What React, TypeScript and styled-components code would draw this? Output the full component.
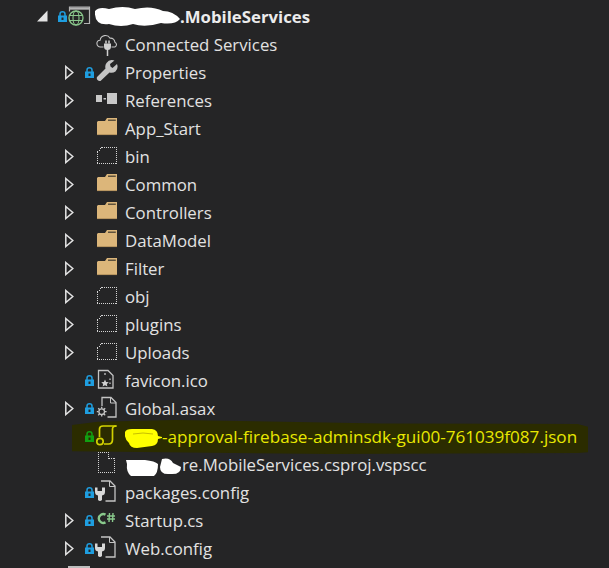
import React from "react";
import styled, { createGlobalStyle } from "styled-components";

type IconKind =
  | "cloud"
  | "wrench"
  | "refs"
  | "folder"
  | "ghost"
  | "ghostFile"
  | "ico"
  | "asax"
  | "json"
  | "config"
  | "csharp";

type Node = {
  label: string;
  icon: IconKind;
  arrow?: boolean;
  lock?: boolean;
  prefix?: "json" | "vspscc";
};

const nodes: Node[] = [
  { label: "Connected Services", icon: "cloud" },
  { label: "Properties", icon: "wrench", arrow: true, lock: true },
  { label: "References", icon: "refs", arrow: true },
  { label: "App_Start", icon: "folder", arrow: true },
  { label: "bin", icon: "ghost", arrow: true },
  { label: "Common", icon: "folder", arrow: true },
  { label: "Controllers", icon: "folder", arrow: true },
  { label: "DataModel", icon: "folder", arrow: true },
  { label: "Filter", icon: "folder", arrow: true },
  { label: "obj", icon: "ghost", arrow: true },
  { label: "plugins", icon: "ghost", arrow: true },
  { label: "Uploads", icon: "ghost", arrow: true },
  { label: "favicon.ico", icon: "ico", lock: true },
  { label: "Global.asax", icon: "asax", arrow: true, lock: true },
  {
    label: "-approval-firebase-adminsdk-gui00-761039f087.json",
    icon: "json",
    lock: true,
    prefix: "json",
  },
  { label: "re.MobileServices.csproj.vspscc", icon: "ghostFile", prefix: "vspscc" },
  { label: "packages.config", icon: "config", lock: true },
  { label: "Startup.cs", icon: "csharp", arrow: true, lock: true },
  { label: "Web.config", icon: "config", arrow: true, lock: true },
];

function Arrow() {
  return (
    <svg width="11" height="15" viewBox="0 0 11 15">
      <path d="M1.8 1.5 L8.8 7.5 L1.8 13.5 Z" fill="none" stroke="#e4e4e4" strokeWidth="1.5" />
    </svg>
  );
}

function Lock({ color }: { color: string }) {
  return (
    <svg width="9" height="11" viewBox="0 0 9 11">
      <path d="M2 5 V3 a2.5 2.2 0 0 1 5 0 V5" fill="none" stroke={color} strokeWidth="1.5" />
      <path fillRule="evenodd" d="M0 4.5 H9 V11 H0 Z M3.5 6.5 V9 H5.5 V6.5 Z" fill={color} />
    </svg>
  );
}

function Icon({ kind }: { kind: IconKind }) {
  switch (kind) {
    case "cloud":
      return (
        <svg width="24" height="24" viewBox="0 0 24 24" fill="none" stroke="#c4c4c4" strokeWidth="1.1">
          <path d="M7.5 15 H4.5 a3.4 3.4 0 0 1 -0.4 -6.8 a5.4 5.4 0 0 1 10 -2 a4.2 4.2 0 0 1 4.8 4 a2.6 2.6 0 0 1 0 4.8 H15.5" />
          <path d="M8 11.5 H15 V14.5 a3.5 3.5 0 0 1 -7 0 Z" fill="#d0d0d0" stroke="none" />
          <path d="M10 8.5 V11.5 M13 8.5 V11.5 M11.5 17 V24" strokeWidth="1.5" stroke="#d0d0d0" />
        </svg>
      );
    case "wrench":
      return (
        <svg width="24" height="24" viewBox="0 0 24 24">
          <path
            d="M21 4 L16.5 8 L14.5 6.5 L14 4 L18.5 0.5 A7 7 0 0 0 10.5 3 A6.5 6.5 0 0 0 9.5 8.5 L1 17 A3 3 0 0 0 4.5 21 L13.5 12.5 A7 7 0 0 0 19.5 11.5 A7 7 0 0 0 21 4 Z"
            fill="#c4c4c4"
          />
        </svg>
      );
    case "refs":
      return (
        <svg width="24" height="24" viewBox="0 0 24 24" fill="#c8c8c8">
          <rect x="0" y="7" width="6" height="7" />
          <rect x="7.5" y="10" width="2.5" height="1.5" />
          <rect x="11" y="5" width="10" height="11" />
        </svg>
      );
    case "folder":
      return (
        <svg width="24" height="24" viewBox="0 0 24 24">
          <path d="M1 6 L2 5 H9 L11 2 H21 V19 H1 Z" fill="#dcb67a" />
          <path d="M12 4.2 H19.8" stroke="#403a2e" strokeWidth="1.2" />
          <path d="M1 18.6 H21" stroke="#a98a58" strokeWidth="0.8" />
        </svg>
      );
    case "ghost":
      return (
        <svg width="24" height="24" viewBox="0 0 24 24" fill="none" stroke="#d4d4d4" strokeWidth="1" strokeDasharray="1 1" shapeRendering="crispEdges">
          <path d="M1 19.5 H21 M20.5 3 V20 M6 3.5 H21 M1.5 8 V20 M1.5 8 L6 3.5" />
        </svg>
      );
    case "ghostFile":
      return (
        <svg width="24" height="24" viewBox="0 0 24 24" fill="none" stroke="#d4d4d4" strokeWidth="1" strokeDasharray="1 1" shapeRendering="crispEdges">
          <path d="M2 0.5 H13 M2.5 0 V21 M2 20.5 H19 M18.5 6 V21 M13 6.5 H19 M12.5 0 V7" />
        </svg>
      );
    case "ico":
      return (
        <svg width="24" height="24" viewBox="0 0 24 24">
          <path d="M2.5 2.5 H12 L17 7.5 V20 H2.5 Z" fill="none" stroke="#c4c4c4" strokeWidth="1.3" />
          <path d="M9 11.5 L10.1 14 L12.8 14.2 L10.8 16 L11.4 18.6 L9 17.2 L6.6 18.6 L7.2 16 L5.2 14.2 L7.9 14 Z" fill="#d0d0d0" />
          <path d="M14 10.5 V12 M14 14.5 V16 M9 5 V7" stroke="#d0d0d0" strokeWidth="1.2" />
        </svg>
      );
    case "asax":
      return (
        <svg width="24" height="24" viewBox="0 0 24 24" fill="none" stroke="#c4c4c4" overflow="visible">
          <path d="M6 10 V1.5 H15 L20 6.5 V21 H11.5" strokeWidth="1.3" />
          <path d="M14.5 1.5 V7 H20" strokeWidth="1" />
          <circle cx="5.7" cy="15.7" r="2.8" strokeWidth="1.3" />
          <path d="M5.7 10.8 V12.5 M5.7 19 V20.6 M0.8 15.7 H2.5 M9 15.7 H10.6 M2.2 12.2 L3.5 13.5 M7.9 17.9 L9.2 19.2 M2.2 19.2 L3.5 17.9 M7.9 13.5 L9.2 12.2" strokeWidth="1.3" />
        </svg>
      );
    case "json":
      return (
        <svg width="24" height="24" viewBox="0 0 24 24" fill="none" stroke="#d2d200" strokeWidth="1.7" overflow="visible">
          <path d="M20.5 2 H7 Q3.5 2 3.5 5 V13" />
          <path d="M20.5 2 Q16.5 2 16.5 5 V15.5 Q16.5 20 12.5 20 H8" />
          <circle cx="4" cy="17.5" r="3.2" />
        </svg>
      );
    case "config":
      return (
        <svg width="24" height="24" viewBox="0 0 24 24" overflow="visible">
          <path d="M5 1 H14 L19 6 V21 H9.5" fill="none" stroke="#c4c4c4" strokeWidth="1.3" />
          <path d="M13.5 1 V6.5 H19" fill="none" stroke="#c4c4c4" strokeWidth="1" />
          <path d="M-1 7.5 H1.5 V11 H6 V7.5 H9 V12 Q9 15 6 15.5 V20 Q4 22 2 20 V15.5 Q-1 15 -1 12 Z" fill="#d8d8d8" />
        </svg>
      );
    case "csharp":
      return (
        <svg width="24" height="24" viewBox="0 0 24 24" fill="none">
          <path d="M9.5 6.6 A4.6 4.4 0 1 0 9.5 14.4" stroke="#89c98c" strokeWidth="2.4" />
          <path d="M13.5 5 L13 14 M17 5 L16.5 14 M11 8 H19 M11 11 H19" stroke="#89c98c" strokeWidth="1.4" />
        </svg>
      );
  }
}

function ProjectIcon() {
  return (
    <svg width="24" height="24" viewBox="0 0 24 24" fill="none">
      <path d="M2 3 H21.5 V19.5 H16" stroke="#b4b4b4" strokeWidth="1.2" />
      <path d="M2 4.5 H21" stroke="#b4b4b4" strokeWidth="2.4" />
      <path d="M1.5 2.5 V7.5" stroke="#b4b4b4" strokeWidth="1.2" />
      <circle cx="8" cy="14" r="7" fill="#252526" stroke="#8ac78c" strokeWidth="1.3" />
      <ellipse cx="8" cy="14" rx="3" ry="7" stroke="#8ac78c" strokeWidth="1.1" />
      <path d="M1.5 11.5 H14.5 M1.5 16.5 H14.5" stroke="#8ac78c" strokeWidth="1.1" />
    </svg>
  );
}

function Scribble({ kind }: { kind: "root" | "json" | "vspscc" }) {
  if (kind === "root") {
    return (
      <ScribbleBox $width={85}>
        <svg width="85" height="28" viewBox="0 0 85 28">
          <path
            d="M0 9 Q4 4 14 7 Q28 3 40 7 Q56 3 68 9 Q78 9 85 17 Q80 23 66 21 Q50 26 38 22 Q26 26 14 22 Q-1 24 0 9 Z"
            fill="#ffffff"
          />
        </svg>
      </ScribbleBox>
    );
  }
  if (kind === "json") {
    return (
      <ScribbleBox $width={37}>
        <svg width="37" height="28" viewBox="0 0 37 28">
          <path d="M0 10 Q1 7 7 7 H27 Q33 8 33 14 L37 15 V16 L33 17 Q33 23 27 24 L12 26 Q5 26 4 21 Q-1 17 0 10 Z" fill="#ffff00" />
          <path d="M8 12 Q18 10 28 12" stroke="#c8bf00" strokeWidth="1" fill="none" />
        </svg>
      </ScribbleBox>
    );
  }
  return (
    <ScribbleBox $width={57}>
      <svg width="57" height="28" viewBox="0 0 57 28">
        <path d="M1 10 H20 Q30 11 33 14 Q33 23 29 26 L6 26 Q1 22 2 14 Z" fill="#ffffff" />
        <path d="M37 9 Q45 7 48 13 L56 17 Q56 25 45 24 Q35 25 35 17 Z" fill="#ffffff" />
      </svg>
    </ScribbleBox>
  );
}

export default function App() {
  return (
    <>
      <GlobalStyle />
      <Tree>
        <Row>
          <RootArrow>
            <svg width="11" height="12" viewBox="0 0 11 12">
              <path d="M10.5 0.5 V11.5 H0 Z" fill="#e4e4e4" />
            </svg>
          </RootArrow>
          <RootLock>
            <Lock color="#1f9ee0" />
          </RootLock>
          <RootIconSlot>
            <ProjectIcon />
          </RootIconSlot>
          <Scribble kind="root" />
          <RootLabel>.MobileServices</RootLabel>
        </Row>
        {nodes.map((node) => (
          <Row key={node.label} $highlight={node.prefix === "json"}>
            <ArrowSlot>{node.arrow ? <Arrow /> : null}</ArrowSlot>
            <LockSlot>
              {node.lock ? <Lock color={node.prefix === "json" ? "#12a012" : "#1f9ee0"} /> : null}
            </LockSlot>
            <IconSlot>
              <Icon kind={node.icon} />
            </IconSlot>
            <Label $highlight={node.prefix === "json"}>
              {node.prefix ? <Scribble kind={node.prefix} /> : null}
              {node.label}
            </Label>
          </Row>
        ))}
        <PeekRow />
      </Tree>
    </>
  );
}

const GlobalStyle = createGlobalStyle`
  html, body {
    margin: 0;
    height: 100%;
    background: #252526;
    overflow: hidden;
  }
`;

const Tree = styled.div`
  height: 568px;
  padding-top: 2px;
  box-sizing: border-box;
  overflow: hidden;
  font-family: "Open Sans", "Noto Sans", sans-serif;
`;

const Row = styled.div<{ $highlight?: boolean }>`
  position: relative;
  isolation: isolate;
  display: flex;
  align-items: center;
  height: 28px;
  ${(p) =>
    p.$highlight
      ? `&::before {
          content: "";
          position: absolute;
          z-index: -1;
          left: 72px;
          right: 21px;
          top: -2px;
          bottom: -4px;
          background: #2b2c00;
          clip-path: polygon(0 15%, 5% 5%, 20% 0, 60% 10%, 98% 12%, 100% 20%, 100% 95%, 98% 97%, 50% 100%, 0 92%);
        }`
      : ""}
`;

const RootArrow = styled.div`
  display: flex;
  width: 21px;
  margin-left: 37px;
`;

const RootLock = styled.div`
  display: flex;
  width: 10px;
`;

const RootIconSlot = styled.div`
  display: flex;
  width: 24px;
  margin-right: 3px;
`;

const ArrowSlot = styled.div`
  display: flex;
  width: 21px;
  margin-left: 64px;
`;

const LockSlot = styled.div`
  display: flex;
  width: 11px;
`;

const IconSlot = styled.div`
  display: flex;
  width: 24px;
  margin-right: 5px;
`;

const ScribbleBox = styled.span<{ $width: number }>`
  display: inline-flex;
  width: ${(p) => p.$width}px;
  flex: none;
`;

const Label = styled.div<{ $highlight?: boolean }>`
  display: flex;
  align-items: center;
  font-size: ${(p) => (p.$highlight ? "17.1px" : "16.8px")};
  white-space: nowrap;
  color: ${(p) => (p.$highlight ? "#e8e800" : "#e2e2e2")};
`;

const RootLabel = styled.div`
  font-size: 16.8px;
  font-weight: 700;
  white-space: nowrap;
  color: #ececec;
`;

const PeekRow = styled.div`
  width: 22px;
  height: 2px;
  margin: 4px 0 0 68px;
  background: #bdbdbd;
`;
